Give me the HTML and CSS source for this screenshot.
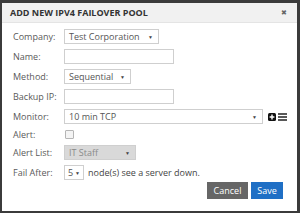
FILE: index.html
```html
<!DOCTYPE html>
<html lang="en">
<head>
    <meta charset="UTF-8">
    <title>Add New IPv4 Failover Pool</title>
    <link rel="stylesheet" href="styles.css">
</head>
<body>

    <div class="dialog">
        <div class="dialog-header">
            <span class="dialog-title">Add New IPv4 Failover Pool</span>
            <span class="dialog-close">&#x2716;</span>
        </div>

        <div class="dialog-body">
            <div class="row">
                <label>Company:</label>
                <div class="select w-company"><span>Test Corporation</span><span class="caret">&#9660;</span></div>
            </div>
            <div class="row">
                <label>Name:</label>
                <div class="input w-name"></div>
            </div>
            <div class="row">
                <label>Method:</label>
                <div class="select w-method"><span>Sequential</span><span class="caret">&#9660;</span></div>
            </div>
            <div class="row">
                <label>Backup IP:</label>
                <div class="input w-name"></div>
            </div>
            <div class="row">
                <label>Monitor:</label>
                <div class="select w-monitor"><span>10 min TCP</span><span class="caret">&#9660;</span></div>
                <svg class="icon" width="8" height="8" viewBox="0 0 8 8">
                    <rect x="0" y="0" width="8" height="8" rx="1.5" fill="#111"/>
                    <path d="M4 1.6v4.8M1.6 4h4.8" stroke="#fff" stroke-width="1.4"/>
                </svg>
                <svg class="icon" width="9" height="8" viewBox="0 0 9 8">
                    <path d="M0 1h9M0 4h9M0 7h9" stroke="#222" stroke-width="1.3"/>
                </svg>
            </div>
            <div class="row row-small">
                <label>Alert:</label>
                <div class="checkbox"></div>
            </div>
            <div class="row">
                <label>Alert List:</label>
                <div class="select disabled w-alert"><span>IT Staff</span><span class="caret">&#9660;</span></div>
            </div>
            <div class="row row-last">
                <label>Fail After:</label>
                <div class="select w-fail"><span>5</span><span class="caret">&#9660;</span></div>
                <span class="suffix">node(s) see a server down.</span>
            </div>
        </div>

        <div class="dialog-footer">
            <button class="btn btn-cancel">Cancel</button>
            <button class="btn btn-save">Save</button>
        </div>
    </div>

</body>
</html>
```

FILE: styles.css
```css
body {
    margin: 0;
    padding: 0;
    background-color: #3b3b3b;
    font-family: "Open Sans", Arial, sans-serif;
    width: 300px;
    height: 213px;
    overflow: hidden;
}

/* Modal */
.dialog {
    margin: 3px 3px 0 2px;
    height: 208px;
    background-color: #ffffff;
    display: flex;
    flex-direction: column;
}

.dialog-header {
    height: 19px;
    background-color: #f1f1f1;
    border-bottom: 1px solid #e4e4e4;
    display: flex;
    align-items: center;
    justify-content: space-between;
    padding: 0 10px 0 8px;
}

.dialog-title {
    font-size: 9px;
    font-weight: bold;
    text-transform: uppercase;
    color: #333333;
}

.dialog-close {
    font-size: 7px;
    color: #666666;
}

/* Form rows */
.dialog-body {
    padding: 6px 0 0 11px;
}

.row {
    display: flex;
    align-items: center;
    height: 15px;
    margin-bottom: 5px;
    font-size: 9px;
}

.row-small {
    height: 11px;
}

.row-last {
    margin-bottom: 2px;
}

.row label {
    width: 51px;
    color: #5a5a5a;
}

.select,
.input {
    box-sizing: border-box;
    height: 15px;
    border: 1px solid #cfcfcf;
    background-color: #ffffff;
    color: #555555;
}

.select {
    display: flex;
    align-items: center;
    justify-content: space-between;
    padding: 0 5px 0 4px;
}

.select.disabled {
    background-color: #d9d9d9;
    color: #8a8a8a;
}

.caret {
    font-size: 5px;
    color: #444444;
}

.w-company { width: 95px; }
.w-name    { width: 110px; }
.w-method  { width: 67px; }
.w-monitor { width: 199px; margin-right: 5px; }
.w-alert   { width: 72px; }
.w-fail    { width: 20px; padding: 0 3px; margin-right: 4px; }

.icon {
    margin-right: 2px;
}

.checkbox {
    width: 7px;
    height: 7px;
    margin-left: 1px;
    border: 1px solid #b5b5b5;
    border-radius: 1px;
    background-color: #f4f4f4;
}

.suffix {
    color: #444444;
}

/* Footer buttons */
.dialog-footer {
    display: flex;
    justify-content: flex-end;
    gap: 3px;
    padding: 0 14px 0 0;
}

.btn {
    border: none;
    height: 17px;
    padding: 0 5px;
    font-family: "Open Sans", Arial, sans-serif;
    font-size: 9px;
    color: #ffffff;
}

.btn-cancel {
    width: 41px;
    background-color: #666666;
}

.btn-save {
    width: 32px;
    background-color: #1f6fc5;
}
```
